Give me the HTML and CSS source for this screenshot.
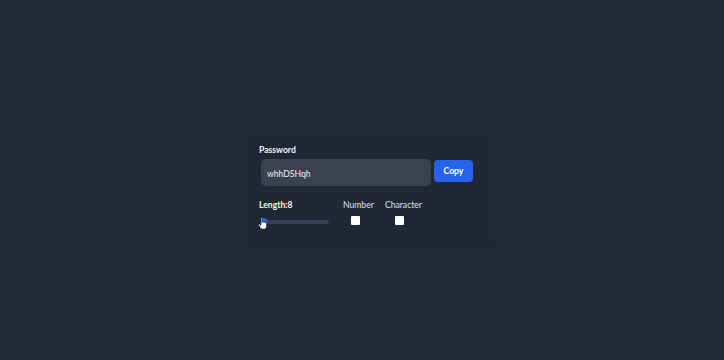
FILE: index.html
```html
<!DOCTYPE html>
<html>
<head>
<meta charset="utf-8">
<link rel="stylesheet" href="styles.css">
</head>
<body>
<main class="page">
  <section class="card">
    <label class="label">Password</label>
    <div class="pw-row">
      <div class="pw-input">whhDSHqh</div>
      <button class="copy">Copy</button>
    </div>
    <div class="options">
      <div class="opt opt-length">
        <span class="opt-label bold">Length:8</span>
        <div class="slider">
          <div class="track"></div>
          <div class="thumb"></div>
          <svg class="cursor" width="10" height="13" viewBox="0 0 10 13">
            <path d="M3 1.2c0-.7 1.2-.7 1.2 0v4.3l.3-.1V4.6c0-.7 1.2-.7 1.2 0v1l.3-.1c0-.7 1.2-.7 1.2 0l.2.3c0-.6 1.1-.6 1.1.1v3.3c0 1.6-1 2.9-2.7 2.9H4.5c-1 0-1.6-.5-2.1-1.2L.6 7.8c-.4-.6.4-1.2.9-.7L3 8.4z" fill="#fff" stroke="#1a1f2b" stroke-width=".6"/>
          </svg>
        </div>
      </div>
      <div class="opt opt-num">
        <span class="opt-label">Number</span>
        <span class="box"></span>
      </div>
      <div class="opt opt-char">
        <span class="opt-label">Character</span>
        <span class="box"></span>
      </div>
    </div>
  </section>
</main>
</body>
</html>
```
FILE: styles.css
```css
* { box-sizing: border-box; }
html, body { margin: 0; height: 100%; }
body {
  background: #222938;
  font-family: Lato, "Noto Sans", sans-serif;
  color: #e5e7eb;
}
.page {
  display: flex;
  justify-content: flex-start;
  padding-top: 134px;
  padding-left: 245px;
}
.card {
  width: 247px;
  height: 114px;
  background: #202736;
  box-shadow: 0 3px 6px rgba(0,0,0,0.07);
  border-radius: 3px;
  padding: 11px 14px 0 14px;
  display: flex;
  flex-direction: column;
}
.label {
  font-size: 8.6px;
  font-weight: 700;
  color: #f3f4f6;
  line-height: 10px;
  height: 10px;
}
.pw-row {
  display: flex;
  align-items: center;
  gap: 3px;
  margin-top: 4px;
  margin-left: 2px;
}
.pw-input {
  width: 170px;
  height: 27px;
  background: #3a4252;
  border-radius: 5px;
  font-size: 8.6px;
  color: #eef0f3;
  padding-left: 6px;
  padding-top: 2px;
  display: flex;
  align-items: center;
}
.copy {
  width: 39px;
  height: 22px;
  border: 0;
  border-radius: 4px;
  background: #2563eb;
  color: #fff;
  font-family: inherit;
  font-size: 8.6px;
  font-weight: 700;
  padding: 0;
  margin-top: -4px;
}
.options {
  display: flex;
  margin-top: 14px;
}
.opt {
  display: flex;
  flex-direction: column;
}
.opt-label {
  font-size: 8.6px;
  line-height: 11px;
  color: #dfe2e7;
}
.bold { font-weight: 700; color: #f3f4f6; }
.opt-length { width: 84px; }
.slider {
  position: relative;
  margin-top: 5px;
  margin-left: 2px;
  width: 68px;
  height: 12px;
}
.track {
  margin-top: 4px;
  height: 4px;
  border-radius: 2px;
  background: #374151;
}
.thumb {
  position: absolute;
  left: 0;
  top: 2px;
  width: 6px;
  height: 8px;
  border-radius: 3px;
  background: #2563eb;
}
.cursor {
  position: absolute;
  left: -3px;
  top: 1px;
}
.opt-num { width: 42px; }
.opt-num .box { margin-left: 8px; }
.opt-char .box { margin-left: 10px; }
.box {
  margin-top: 5px;
  width: 9px;
  height: 9px;
  background: #fff;
  border-radius: 1px;
}
```
